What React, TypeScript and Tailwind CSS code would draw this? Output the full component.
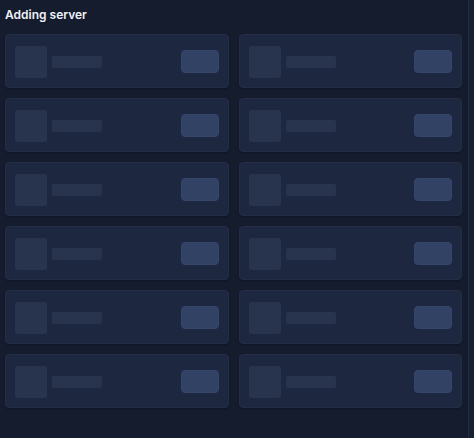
import React from "react";

function Card() {
  return (
    <div className="flex h-[54px] items-center rounded-[4px] border border-[#232d45] bg-[#1e2740] pl-[9px] pr-[9px] shadow-[0_1px_2px_rgba(0,0,0,0.25)]">
      <div className="mt-[2px] h-[32px] w-[32px] rounded-[2px] bg-[#28334d]" />
      <div className="ml-[5px] mt-[2px] h-[12px] w-[50px] rounded-[2px] bg-[#28334d]" />
      <div className="ml-auto h-[23px] w-[38px] rounded-[4px] border border-[#36466a] bg-[#314265]" />
    </div>
  );
}

export default function App() {
  const cards = Array.from({ length: 12 });
  return (
    <div
      className="flex h-[438px] w-[474px] bg-[#151c2e]"
      style={{ fontFamily: "Inter, 'Noto Sans', sans-serif" }}
    >
      <div className="w-[468px] pl-[5px] pr-[6px]">
        <h1 className="pt-[6px] text-[12px] font-semibold leading-[18px] text-[#eef1f6]">
          Adding server
        </h1>
        <div className="mt-[10px] grid grid-cols-2 gap-[10px]">
          {cards.map((_, i) => (
            <Card key={i} />
          ))}
        </div>
      </div>
      <div className="w-[6px] border-l border-[#232c42] bg-[#182033]" />
    </div>
  );
}
